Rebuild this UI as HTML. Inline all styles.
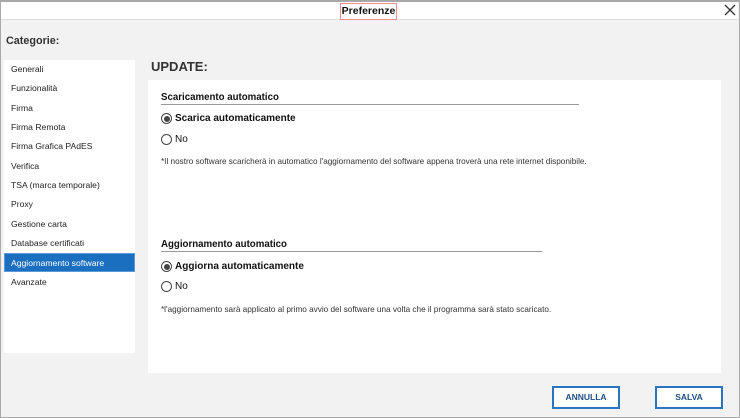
<!DOCTYPE html>
<html><head><style>
*{margin:0;padding:0;box-sizing:border-box}
body{width:740px;height:418px;overflow:hidden;font-family:"Liberation Sans",Arial,sans-serif;background:#f2f2f2;position:relative;color:#111}
.abs{position:absolute}
.win{left:0;top:0;width:740px;height:418px;border:1px solid #a8a8a8;border-top:2px solid #a8a8a8}
.title{left:1px;top:2px;width:737px;height:18px;background:#fff;border-bottom:1px solid #ddd}
.ttl{left:340px;top:3px;width:57px;height:17px;border:1px solid #f08c8c;font-size:10.5px;font-weight:bold;text-align:center;line-height:15px;background:#fff}
.side{left:4px;top:60px;width:131px;height:293px;background:#fff}
.item{position:absolute;left:0;width:131px;height:19px;font-size:8.6px;line-height:19px;padding-left:7px;color:#222}
.sel{background:#1b6fc0;color:#fff;border:1px solid #5b9ad8}
.panel{left:148px;top:80px;width:573px;height:293px;background:#fff}
.h{font-size:9.7px;font-weight:bold}
.line{height:1px;background:#999}
.radio{width:11px;height:11px;border:1px solid #444;border-radius:50%}
.radio.on::after{content:"";position:absolute;left:1.5px;top:1.5px;width:6px;height:6px;border-radius:50%;background:#444}
.note{font-size:8.2px;color:#333;white-space:nowrap}
.btn{width:68px;height:23px;border:2px solid #2a74c0;background:#fff;font-size:8.5px;font-weight:bold;color:#1f4f86;text-align:center;line-height:19px}
</style></head><body>
<div class="abs win"></div>
<div class="abs title"></div>
<div class="abs ttl">Preferenze</div>
<svg class="abs" style="left:724px;top:4px" width="12" height="12"><path d="M1 1L11 11M11 1L1 11" stroke="#333" stroke-width="1.3"/></svg>
<div class="abs" style="left:6px;top:35px;font-size:10.8px;font-weight:bold;color:#333">Categorie:</div>
<div class="abs side">
<div class="item" style="top:0">Generali</div>
<div class="item" style="top:19px">Funzionalità</div>
<div class="item" style="top:39px">Firma</div>
<div class="item" style="top:58px">Firma Remota</div>
<div class="item" style="top:77px">Firma Grafica PAdES</div>
<div class="item" style="top:97px">Verifica</div>
<div class="item" style="top:116px">TSA (marca temporale)</div>
<div class="item" style="top:135px">Proxy</div>
<div class="item" style="top:155px">Gestione carta</div>
<div class="item" style="top:174px">Database certificati</div>
<div class="item sel" style="top:193px;padding-left:6px">Aggiornamento software</div>
<div class="item" style="top:213px">Avanzate</div>
</div>
<div class="abs" style="left:151px;top:59px;font-size:13px;font-weight:bold;color:#333">UPDATE:</div>
<div class="abs panel"></div>
<div class="abs h" style="left:161px;top:92px">Scaricamento automatico</div>
<div class="abs line" style="left:161px;top:104px;width:418px"></div>
<div class="abs radio on" style="left:161px;top:113px"></div>
<div class="abs h" style="left:175px;top:113px;font-size:10px">Scarica automaticamente</div>
<div class="abs radio" style="left:161px;top:134px"></div>
<div class="abs" style="left:175px;top:134px;font-size:10px">No</div>
<div class="abs note" style="left:161px;top:157px">*Il nostro software scaricherà in automatico l'aggiornamento del software appena troverà una rete internet disponibile.</div>
<div class="abs h" style="left:161px;top:239px">Aggiornamento automatico</div>
<div class="abs line" style="left:161px;top:251px;width:381px"></div>
<div class="abs radio on" style="left:161px;top:261px"></div>
<div class="abs h" style="left:175px;top:261px;font-size:10px">Aggiorna automaticamente</div>
<div class="abs radio" style="left:161px;top:281px"></div>
<div class="abs" style="left:175px;top:281px;font-size:10px">No</div>
<div class="abs note" style="left:161px;top:305px">*l'aggiornamento sarà applicato al primo avvio del software una volta che il programma sarà stato scaricato.</div>
<div class="abs btn" style="left:552px;top:386px">ANNULLA</div>
<div class="abs btn" style="left:655px;top:386px">SALVA</div>
</body></html>
